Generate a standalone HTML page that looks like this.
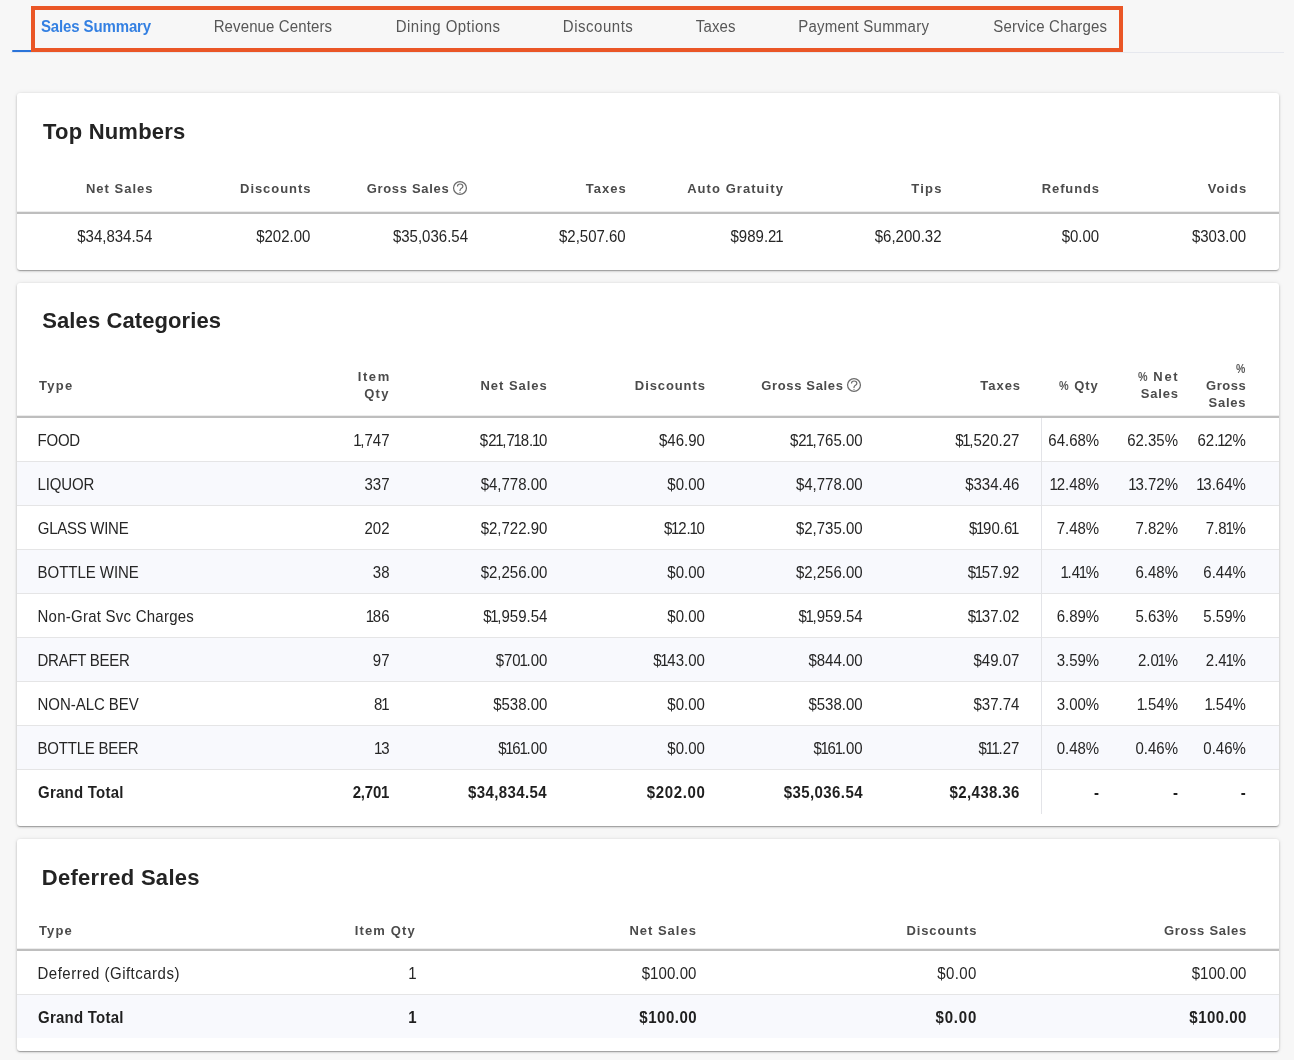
<!DOCTYPE html>
<html lang="en"><head><meta charset="utf-8"><title>Sales Summary</title>
<style>
*{box-sizing:border-box}
html,body{margin:0;padding:0}
body{width:1294px;height:1060px;overflow:hidden;background:#f7f7f7;font-family:"Liberation Sans",sans-serif;color:#262626;position:relative}
#app{position:absolute;left:0;top:0;width:1294px;height:1060px;will-change:transform}
.tabs{position:absolute;left:11px;top:0;width:1273px;height:53px;border-bottom:1px solid #e6e8ee}
.tab{position:absolute;font-size:15px;line-height:18px;color:#575757;white-space:nowrap;transform:scaleY(1.04);transform-origin:0 0}
.tab.on{color:#3480e2;font-weight:700}
.ink{position:absolute;left:11.5px;top:50px;width:22px;height:2px;background:#2b74d9;border-radius:1px 0 0 1px}
.hl{position:absolute;left:31px;top:6px;width:1092px;height:46px;border:4px solid #ea5626}
.card{position:absolute;left:17px;width:1262.3px;background:#fff;border-radius:3px;box-shadow:0 1px 3px 0 rgba(0,0,0,.2),0 1px 1px 0 rgba(0,0,0,.14),0 2px 1px -1px rgba(0,0,0,.12),0 0 5px 0 rgba(0,0,0,.07)}
.card h2{position:absolute;margin:0;font-size:22px;line-height:26px;font-weight:700;white-space:nowrap;color:#232323}
.row{position:absolute;left:0;width:100%}
.row.hd{border-bottom:2px solid #bebebe;box-shadow:inset 0 -1px 0 #ececec}
.row.bd{border-bottom:1px solid #e5e5e6}
.row.alt{background:#f8f9fd}
.c{position:absolute;white-space:nowrap;font-size:15px;line-height:18px;transform:scaleY(1.075);transform-origin:0 0}
.h{position:absolute;font-size:13px;line-height:17px;font-weight:700;color:#4b4b4b;white-space:nowrap;transform:scaleY(1.05);transform-origin:0 0}
.b{font-weight:700;color:#1f1f1f}
i{font-style:normal;margin:0 -1.25px}
i.e{margin-right:0}
.q{position:absolute;width:16px;height:16px}
.vr{position:absolute;width:1px;background:#e3e4e8}
</style></head>
<body>
<div id="app">
<div class="tabs">
<div class="tab on" style="left:29.9px;top:17px;letter-spacing:-0.12px">Sales Summary</div>
<div class="tab" style="left:202.65px;top:17px;letter-spacing:0.12px">Revenue Centers</div>
<div class="tab" style="left:384.75px;top:17px;letter-spacing:0.46px">Dining Options</div>
<div class="tab" style="left:551.85px;top:17px;letter-spacing:0.52px">Discounts</div>
<div class="tab" style="left:684.75px;top:17px;letter-spacing:0.15px">Taxes</div>
<div class="tab" style="left:787.15px;top:17px;letter-spacing:0.23px">Payment Summary</div>
<div class="tab" style="left:982.25px;top:17px;letter-spacing:0.21px">Service Charges</div>
</div>
<div class="ink"></div>
<div class="hl"></div>
<div class="card" style="top:93px;height:176.5px">
<h2 style="left:26.05px;top:25.5px;letter-spacing:0.2px;font-size:22px">Top Numbers</h2>
<div class="row hd" style="top:69.5px;height:51.0px">
<div class="h" style="left:68.95px;top:16.5px;letter-spacing:1.01px">Net Sales</div>
<div class="h" style="left:223.05px;top:16.5px;letter-spacing:0.94px">Discounts</div>
<div class="h" style="left:349.7px;top:16.5px;letter-spacing:0.69px">Gross Sales</div>
<div class="h" style="left:568.75px;top:16.5px;letter-spacing:1.03px">Taxes</div>
<div class="h" style="left:670.15px;top:16.5px;letter-spacing:1.06px">Auto Gratuity</div>
<div class="h" style="left:894.25px;top:16.5px;letter-spacing:1.22px">Tips</div>
<div class="h" style="left:1024.85px;top:16.5px;letter-spacing:0.86px">Refunds</div>
<div class="h" style="left:1190.75px;top:16.5px;letter-spacing:1.02px">Voids</div>
<svg class="q" style="left:434.95px;top:17.15px" viewBox="-8 -8 16 16"><circle r="6.45" fill="none" stroke="#6b6b6b" stroke-width="1.25"/><path d="M-2.55,-1.6C-2.55,-3.1 -1.5,-4 0.05,-4C1.7,-4 2.85,-3 2.85,-1.6C2.85,0.3 0,0.4 0,2.3L0,3.1" fill="none" stroke="#6b6b6b" stroke-width="1.2"/><circle cy="4.45" r=".65" fill="#8a8a8a"/></svg>
</div>
<div class="row" style="top:120.5px;height:44px">
<div class="c" style="right:1127px;top:13.5px">$34,834.54</div>
<div class="c" style="right:968.9px;top:13.5px">$202.00</div>
<div class="c" style="right:811.3px;top:13.5px">$35,036.54</div>
<div class="c" style="right:653.6px;top:13.5px">$2,507.60</div>
<div class="c" style="right:495.8px;top:13.5px">$989.2<i class="e">1</i></div>
<div class="c" style="right:337.8px;top:13.5px">$6,200.32</div>
<div class="c" style="right:180.1px;top:13.5px">$0.00</div>
<div class="c" style="right:33.2px;top:13.5px">$303.00</div>
</div>
</div>
<div class="card" style="top:282.5px;height:543.5px">
<h2 style="left:25.25px;top:25px;letter-spacing:0.1px;font-size:22px">Sales Categories</h2>
<div class="row hd" style="top:69.5px;height:66px">
<div class="h" style="left:22.05px;top:23.5px;letter-spacing:1.28px">Type</div>
<div class="h" style="left:340.75px;top:15px;letter-spacing:1.58px">Item</div>
<div class="h" style="left:347.2px;top:32px;letter-spacing:1.25px">Qty</div>
<div class="h" style="left:463.45px;top:23.5px;letter-spacing:0.97px">Net Sales</div>
<div class="h" style="left:617.85px;top:23.5px;letter-spacing:0.9px">Discounts</div>
<div class="h" style="left:744.2px;top:23.5px;letter-spacing:0.66px">Gross Sales</div>
<div class="h" style="left:963.35px;top:23.5px;letter-spacing:0.95px">Taxes</div>
<div class="h" style="left:1042.19px;top:23.5px;transform:scale(0.836,1.05);transform-origin:0 0;color:#5a5a5a">%</div>
<div class="h" style="left:1057.3px;top:23.5px;letter-spacing:0.85px">Qty</div>
<div class="h" style="left:1121.39px;top:15px;transform:scale(0.827,1.05);transform-origin:0 0;color:#5a5a5a">%</div>
<div class="h" style="left:1136.35px;top:15px;letter-spacing:1.65px">Net</div>
<div class="h" style="left:1123.8px;top:32px;letter-spacing:0.78px">Sales</div>
<div class="h" style="left:1219px;top:6.5px;transform:scale(0.809,1.05);transform-origin:0 0;color:#5a5a5a">%</div>
<div class="h" style="left:1189.1px;top:23.5px;letter-spacing:0.5px">Gross</div>
<div class="h" style="left:1191.5px;top:41px;letter-spacing:0.77px">Sales</div>
<svg class="q" style="left:829.45px;top:25px" viewBox="-8 -8 16 16"><circle r="6.45" fill="none" stroke="#6b6b6b" stroke-width="1.25"/><path d="M-2.55,-1.6C-2.55,-3.1 -1.5,-4 0.05,-4C1.7,-4 2.85,-3 2.85,-1.6C2.85,0.3 0,0.4 0,2.3L0,3.1" fill="none" stroke="#6b6b6b" stroke-width="1.2"/><circle cy="4.45" r=".65" fill="#8a8a8a"/></svg>
</div>
<div class="row bd" style="top:135.5px;height:44px">
<div class="c" style="left:20.55px;top:13px;letter-spacing:-0.25px">FOOD</div>
<div class="c" style="right:889.8px;top:13px"><i>1</i>,747</div>
<div class="c" style="right:731.9px;top:13px">$2<i>1</i>,7<i>1</i>8.<i>1</i>0</div>
<div class="c" style="right:574.4px;top:13px">$46.90</div>
<div class="c" style="right:416.7px;top:13px">$2<i>1</i>,765.00</div>
<div class="c" style="right:259.9px;top:13px">$<i>1</i>,520.27</div>
<div class="c" style="right:180.1px;top:13px">64.68%</div>
<div class="c" style="right:101.3px;top:13px">62.35%</div>
<div class="c" style="right:33.4px;top:13px">62.<i>1</i>2%</div>
</div>
<div class="row bd alt" style="top:179.5px;height:44px">
<div class="c" style="left:20.55px;top:13px;letter-spacing:-0.14px">LIQUOR</div>
<div class="c" style="right:889.8px;top:13px">337</div>
<div class="c" style="right:731.9px;top:13px">$4,778.00</div>
<div class="c" style="right:574.4px;top:13px">$0.00</div>
<div class="c" style="right:416.7px;top:13px">$4,778.00</div>
<div class="c" style="right:259.9px;top:13px">$334.46</div>
<div class="c" style="right:180.1px;top:13px"><i>1</i>2.48%</div>
<div class="c" style="right:101.3px;top:13px"><i>1</i>3.72%</div>
<div class="c" style="right:33.4px;top:13px"><i>1</i>3.64%</div>
</div>
<div class="row bd" style="top:223.5px;height:44px">
<div class="c" style="left:20.75px;top:13px;letter-spacing:-0.27px">GLASS WINE</div>
<div class="c" style="right:889.8px;top:13px">202</div>
<div class="c" style="right:731.9px;top:13px">$2,722.90</div>
<div class="c" style="right:574.4px;top:13px">$<i>1</i>2.<i>1</i>0</div>
<div class="c" style="right:416.7px;top:13px">$2,735.00</div>
<div class="c" style="right:259.9px;top:13px">$<i>1</i>90.6<i class="e">1</i></div>
<div class="c" style="right:180.1px;top:13px">7.48%</div>
<div class="c" style="right:101.3px;top:13px">7.82%</div>
<div class="c" style="right:33.4px;top:13px">7.8<i>1</i>%</div>
</div>
<div class="row bd alt" style="top:267.5px;height:44px">
<div class="c" style="left:20.55px;top:13px;letter-spacing:-0.04px">BOTTLE WINE</div>
<div class="c" style="right:889.8px;top:13px">38</div>
<div class="c" style="right:731.9px;top:13px">$2,256.00</div>
<div class="c" style="right:574.4px;top:13px">$0.00</div>
<div class="c" style="right:416.7px;top:13px">$2,256.00</div>
<div class="c" style="right:259.9px;top:13px">$<i>1</i>57.92</div>
<div class="c" style="right:180.1px;top:13px"><i>1</i>.4<i>1</i>%</div>
<div class="c" style="right:101.3px;top:13px">6.48%</div>
<div class="c" style="right:33.4px;top:13px">6.44%</div>
</div>
<div class="row bd" style="top:311.5px;height:44px">
<div class="c" style="left:20.55px;top:13px;letter-spacing:0.24px">Non-Grat Svc Charges</div>
<div class="c" style="right:889.8px;top:13px"><i>1</i>86</div>
<div class="c" style="right:731.9px;top:13px">$<i>1</i>,959.54</div>
<div class="c" style="right:574.4px;top:13px">$0.00</div>
<div class="c" style="right:416.7px;top:13px">$<i>1</i>,959.54</div>
<div class="c" style="right:259.9px;top:13px">$<i>1</i>37.02</div>
<div class="c" style="right:180.1px;top:13px">6.89%</div>
<div class="c" style="right:101.3px;top:13px">5.63%</div>
<div class="c" style="right:33.4px;top:13px">5.59%</div>
</div>
<div class="row bd alt" style="top:355.5px;height:44px">
<div class="c" style="left:20.55px;top:13px;letter-spacing:-0.27px">DRAFT BEER</div>
<div class="c" style="right:889.8px;top:13px">97</div>
<div class="c" style="right:731.9px;top:13px">$70<i>1</i>.00</div>
<div class="c" style="right:574.4px;top:13px">$<i>1</i>43.00</div>
<div class="c" style="right:416.7px;top:13px">$844.00</div>
<div class="c" style="right:259.9px;top:13px">$49.07</div>
<div class="c" style="right:180.1px;top:13px">3.59%</div>
<div class="c" style="right:101.3px;top:13px">2.0<i>1</i>%</div>
<div class="c" style="right:33.4px;top:13px">2.4<i>1</i>%</div>
</div>
<div class="row bd" style="top:399.5px;height:44px">
<div class="c" style="left:20.55px;top:13px;letter-spacing:-0.05px">NON-ALC BEV</div>
<div class="c" style="right:889.8px;top:13px">8<i class="e">1</i></div>
<div class="c" style="right:731.9px;top:13px">$538.00</div>
<div class="c" style="right:574.4px;top:13px">$0.00</div>
<div class="c" style="right:416.7px;top:13px">$538.00</div>
<div class="c" style="right:259.9px;top:13px">$37.74</div>
<div class="c" style="right:180.1px;top:13px">3.00%</div>
<div class="c" style="right:101.3px;top:13px"><i>1</i>.54%</div>
<div class="c" style="right:33.4px;top:13px"><i>1</i>.54%</div>
</div>
<div class="row bd alt" style="top:443.5px;height:44px">
<div class="c" style="left:20.55px;top:13px;letter-spacing:-0.22px">BOTTLE BEER</div>
<div class="c" style="right:889.8px;top:13px"><i>1</i>3</div>
<div class="c" style="right:731.9px;top:13px">$<i>1</i>6<i>1</i>.00</div>
<div class="c" style="right:574.4px;top:13px">$0.00</div>
<div class="c" style="right:416.7px;top:13px">$<i>1</i>6<i>1</i>.00</div>
<div class="c" style="right:259.9px;top:13px">$<i>1</i><i>1</i>.27</div>
<div class="c" style="right:180.1px;top:13px">0.48%</div>
<div class="c" style="right:101.3px;top:13px">0.46%</div>
<div class="c" style="right:33.4px;top:13px">0.46%</div>
</div>
<div class="row" style="top:487.5px;height:44px">
<div class="c b" style="left:21.05px;top:13px;letter-spacing:0.23px">Grand Total</div>
<div class="c b" style="left:335.7px;top:13px;letter-spacing:-0.22px">2,701</div>
<div class="c b" style="left:451.05px;top:13px;letter-spacing:0.38px">$34,834.54</div>
<div class="c b" style="left:629.65px;top:13px;letter-spacing:0.68px">$202.00</div>
<div class="c b" style="left:766.75px;top:13px;letter-spacing:0.41px">$35,036.54</div>
<div class="c b" style="left:932.45px;top:13px;letter-spacing:0.41px">$2,438.36</div>
<div class="c b" style="left:1077.1px;top:13px">-</div>
<div class="c b" style="left:1155.9px;top:13px">-</div>
<div class="c b" style="left:1223.8px;top:13px">-</div>
</div>
<div class="vr" style="left:1024px;top:135.5px;height:396px"></div>
</div>
<div class="card" style="top:839px;height:212px">
<h2 style="left:24.8px;top:25.5px;letter-spacing:0.28px;font-size:22px">Deferred Sales</h2>
<div class="row hd" style="top:69px;height:43px">
<div class="h" style="left:21.95px;top:12.5px;letter-spacing:1.18px">Type</div>
<div class="h" style="left:337.85px;top:12.5px;letter-spacing:1.12px">Item Qty</div>
<div class="h" style="left:612.45px;top:12.5px;letter-spacing:0.99px">Net Sales</div>
<div class="h" style="left:889.45px;top:12.5px;letter-spacing:0.9px">Discounts</div>
<div class="h" style="left:1146.9px;top:12.5px;letter-spacing:0.72px">Gross Sales</div>
</div>
<div class="row bd" style="top:112px;height:44px">
<div class="c" style="left:20.55px;top:13px;letter-spacing:0.49px">Deferred (Giftcards)</div>
<div class="c" style="left:391.18px;top:13px">1</div>
<div class="c" style="left:624.65px;top:13px;letter-spacing:0.09px">$100.00</div>
<div class="c" style="left:920.35px;top:13px;letter-spacing:0.36px">$0.00</div>
<div class="c" style="left:1174.65px;top:13px;letter-spacing:0.09px">$100.00</div>
</div>
<div class="row alt" style="top:156px;height:43px">
<div class="c b" style="left:21.05px;top:13px;letter-spacing:0.23px">Grand Total</div>
<div class="c b" style="left:391.2px;top:13px">1</div>
<div class="c b" style="left:622.35px;top:13px;letter-spacing:0.52px">$100.00</div>
<div class="c b" style="left:918.55px;top:13px;letter-spacing:0.81px">$0.00</div>
<div class="c b" style="left:1172.35px;top:13px;letter-spacing:0.48px">$100.00</div>
</div>
</div>
</div>
</body></html>
